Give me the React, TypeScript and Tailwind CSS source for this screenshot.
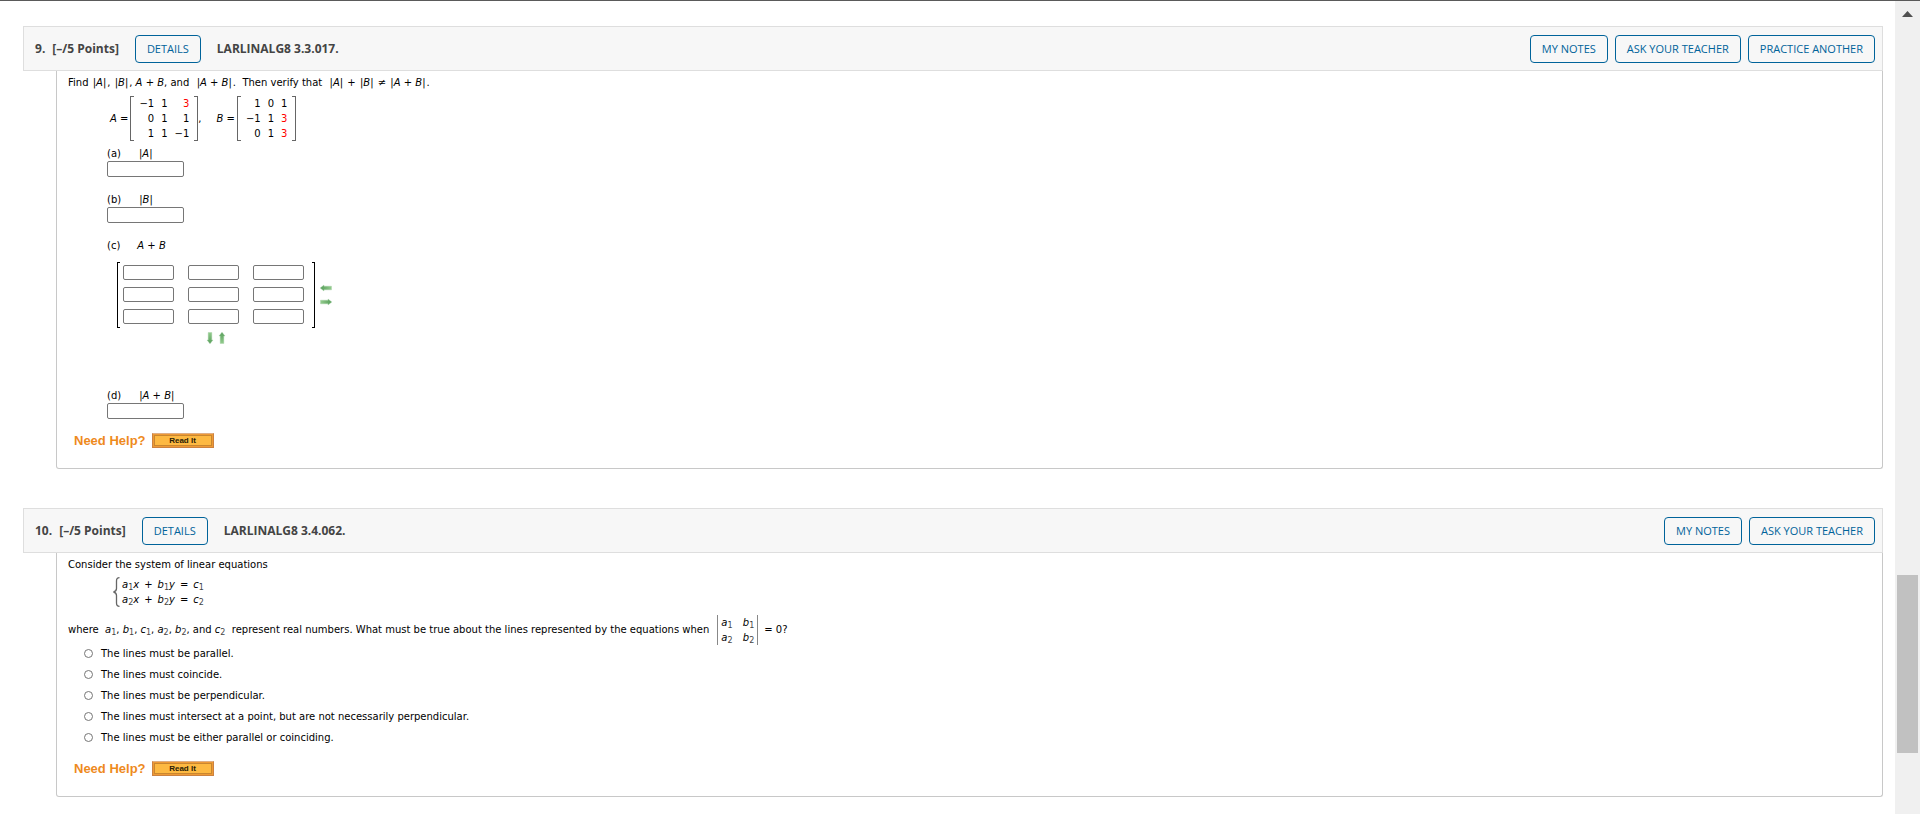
import React from 'react';

type Cell = { value: string; changed?: boolean };

const matrixA: Cell[] = [
  { value: '−1' }, { value: '1' }, { value: '3', changed: true },
  { value: '0' }, { value: '1' }, { value: '1' },
  { value: '1' }, { value: '1' }, { value: '−1' },
];

const matrixB: Cell[] = [
  { value: '1' }, { value: '0' }, { value: '1' },
  { value: '−1' }, { value: '1' }, { value: '3', changed: true },
  { value: '0' }, { value: '1' }, { value: '3', changed: true },
];

const choices = [
  'The lines must be parallel.',
  'The lines must coincide.',
  'The lines must be perpendicular.',
  'The lines must intersect at a point, but are not necessarily perpendicular.',
  'The lines must be either parallel or coinciding.',
];

const HeaderButton: React.FC<{ children: React.ReactNode }> = ({ children }) => (
  <button
    type="button"
    className="h-7 rounded border border-[#00639a] px-[11px] text-[11px] leading-none text-[#00639a] hover:bg-white"
  >
    {children}
  </button>
);

interface QuestionProps {
  number: string;
  code: string;
  actions: string[];
  children: React.ReactNode;
}

const Question: React.FC<QuestionProps> = ({ number, code, actions, children }) => (
  <section>
    <header className="flex h-[45px] items-center border border-[#dedede] bg-[#f7f7f7] pr-[7px] pl-[11px] font-['Open_Sans',sans-serif] text-[12px] font-bold text-[#444]">
      <h2 className="mr-4 flex gap-[7px]">
        <span>{number}.</span>
        <span>[–/5 Points]</span>
      </h2>
      <div className="font-normal">
        <HeaderButton>DETAILS</HeaderButton>
      </div>
      <span className="ml-4">{code}</span>
      <div className="ml-auto flex gap-[7px] font-normal">
        {actions.map((action) => (
          <HeaderButton key={action}>{action}</HeaderButton>
        ))}
      </div>
    </header>
    <div className="ml-[33px] rounded-b-[3px] border border-t-0 border-[#c8c8c8] pt-[5px] pb-5 pl-[11px] text-[10px] leading-[14px]">
      {children}
    </div>
  </section>
);

const Bracket: React.FC<{ side: 'left' | 'right'; dark?: boolean }> = ({ side, dark }) => (
  <span
    className={`shrink-0 self-stretch border-y ${side === 'left' ? 'border-l' : 'border-r'} ${
      dark ? 'w-[3px] border-black' : 'w-1 border-[#666]'
    }`}
  />
);

const Matrix: React.FC<{ cells: Cell[] }> = ({ cells }) => (
  <span className="flex">
    <Bracket side="left" />
    <span className="grid grid-cols-[repeat(3,auto)] gap-x-[7px] px-[5px] text-right leading-[15px]">
      {cells.map((cell, i) => (
        <span key={i} className={cell.changed ? 'text-[#f00]' : ''}>{cell.value}</span>
      ))}
    </span>
    <Bracket side="right" />
  </span>
);

// Determinant bars around an expression
const Det: React.FC<{ children: React.ReactNode }> = ({ children }) => (
  <span className="px-px">|{children}|</span>
);

const Term: React.FC<{ name: string; index: number }> = ({ name, index }) => (
  <>
    <i>{name}</i>
    <sub className="text-[8px] text-[#444]">{index}</sub>
  </>
);

interface PartProps {
  id: string;
  label: React.ReactNode;
}

const Part: React.FC<PartProps> = ({ id, label }) => (
  <div>
    <label htmlFor={`part-${id}`} className="flex gap-[17px]">
      <span>({id})</span>
      <span>{label}</span>
    </label>
    <input
      id={`part-${id}`}
      type="text"
      className="block h-4 w-[77px] rounded-xs border border-[#767676] bg-white px-1"
    />
  </div>
);

const arrowTurns = {
  right: 'rotate-0',
  down: 'rotate-90',
  left: 'rotate-180',
  up: '-rotate-90',
};

const ResizeButton: React.FC<{ direction: keyof typeof arrowTurns; label: string }> = ({ direction, label }) => (
  <button type="button" aria-label={label} className="flex size-3 items-center justify-center">
    <svg viewBox="0 0 12 12" className={`size-3 ${arrowTurns[direction]}`}>
      <defs>
        <linearGradient id={`green-${direction}`} x1="0" y1="0" x2="1" y2="0">
          <stop offset="0" stopColor="#93cc8d" />
          <stop offset="1" stopColor="#569d5a" />
        </linearGradient>
      </defs>
      <path
        d="M.5 4.2H8V3L11.8 6 8 9V7.800H.5Z"
        fill={`url(#green-${direction})`}
        stroke="#a5cfa3"
        strokeWidth=".4"
      />
    </svg>
  </button>
);

const NeedHelp: React.FC = () => (
  <div className="ml-1.5 flex h-[15px] items-center gap-1.5 font-['Liberation_Sans',Arial,sans-serif] font-bold">
    <span className="text-[13px] text-[#ee8a1d]">Need Help?</span>
    <button
      type="button"
      className="flex h-[15px] w-[62px] border border-[#cc8240] border-t-[#dfae84] bg-[#ee9a35] p-px text-[8px] leading-none text-[#2b1c05]"
    >
      <span className="flex h-full w-full items-center justify-center border border-[#c98630] bg-[#fdb942]">
        Read It
      </span>
    </button>
  </div>
);

const ScrollTrack: React.FC = () => (
  <div aria-hidden="true" className="flex w-[25px] shrink-0 flex-col items-center bg-[#f0f0f0]">
    <svg viewBox="0 0 11 6" className="mt-2.5 h-1.5 w-[11px]">
      <path d="M5.5 0 11 6H0Z" fill="#505050" />
    </svg>
    <div className="grow-[558]" />
    <div className="w-[21px] grow-[178] bg-[#c1c1c1]" />
    <div className="grow-[61]" />
  </div>
);

const App: React.FC = () => {
  return (
    <div className="flex min-h-screen border-t border-[#5a5a5a] bg-white font-[Verdana,'DejaVu_Sans',sans-serif] text-black">
      <main className="flex min-w-0 flex-1 flex-col gap-[39px] pt-[25px] pr-3 pb-4 pl-[23px]">
        <Question
          number="9"
          code="LARLINALG8 3.3.017."
          actions={['MY NOTES', 'ASK YOUR TEACHER', 'PRACTICE ANOTHER']}
        >
          <p>
            Find <Det><i>A</i></Det>, <Det><i>B</i></Det>, <i>A</i> + <i>B</i>, and&nbsp;{' '}
            <Det><i>A</i> + <i>B</i></Det>.&nbsp; Then verify that&nbsp; <Det><i>A</i></Det> +{' '}
            <Det><i>B</i></Det> ≠ <Det><i>A</i> + <i>B</i></Det>.
          </p>
          <div className="mt-1.5 ml-[42px] flex items-center">
            <span className="mr-0.5"><i>A</i> =</span>
            <Matrix cells={matrixA} />
            <span className="mr-[15px]">,</span>
            <span className="mr-0.5"><i>B</i> =</span>
            <Matrix cells={matrixB} />
          </div>

          <div className="mt-1.5 ml-[39px] flex flex-col gap-4">
            <Part id="a" label={<Det><i>A</i></Det>} />
            <Part id="b" label={<Det><i>B</i></Det>} />
            <div>
              <div className="flex gap-[17px]">
                <span>(c)</span>
                <span><i>A</i> + <i>B</i></span>
              </div>
              <div className="mt-[9px] ml-2.5 flex w-fit items-center">
                <Bracket side="left" dark />
                <div className="grid grid-cols-3 gap-x-3.5 gap-y-[7px] pt-[3px] pr-2 pb-1 pl-[3px]">
                  {Array.from({ length: 9 }, (_, i) => (
                    <input
                      key={i}
                      type="text"
                      aria-label={`Row ${Math.floor(i / 3) + 1}, column ${(i % 3) + 1}`}
                      className="h-[15px] w-[51px] rounded-xs border border-[#767676] bg-white px-1"
                    />
                  ))}
                </div>
                <Bracket side="right" dark />
                <div className="ml-[5px] flex flex-col gap-0.5">
                  <ResizeButton direction="left" label="Remove column" />
                  <ResizeButton direction="right" label="Add column" />
                </div>
              </div>
              <div className="mt-1 flex w-[218px] justify-center">
                <ResizeButton direction="down" label="Add row" />
                <ResizeButton direction="up" label="Remove row" />
              </div>
            </div>
          </div>
          <div className="mt-[45px] mb-3.5 ml-[39px]">
            <Part id="d" label={<Det><i>A</i> + <i>B</i></Det>} />
          </div>
          <NeedHelp />
        </Question>

        <Question number="10" code="LARLINALG8 3.4.062." actions={['MY NOTES', 'ASK YOUR TEACHER']}>
          <p>Consider the system of linear equations</p>
          <div className="mt-[5px] ml-[45px] flex gap-0.5">
            <svg viewBox="0 0 7 30" className="h-[30px] w-[7px]" fill="none" stroke="#666" strokeWidth="1.3">
              <path d="M6.5 .7C4.2 .7 3.5 2 3.5 4V11.5C3.5 13.5 2.5 14.5 .5 15 2.5 15.5 3.5 16.5 3.5 18.5V26C3.5 28 4.2 29.3 6.5 29.3" />
            </svg>
            <div className="leading-[15px]">
              {[1, 2].map((n) => (
                <div key={n} className="flex h-[15px] gap-[5px]">
                  <span><Term name="a" index={n} /><i>x</i></span>
                  <span>+</span>
                  <span><Term name="b" index={n} /><i>y</i></span>
                  <span>=</span>
                  <span><Term name="c" index={n} /></span>
                </div>
              ))}
            </div>
          </div>
          <div className="mt-2 flex items-center">
            <p>
              where&nbsp; <Term name="a" index={1} />, <Term name="b" index={1} />, <Term name="c" index={1} />,{' '}
              <Term name="a" index={2} />, <Term name="b" index={2} />, and <Term name="c" index={2} />
              &nbsp; represent real numbers. What must be true about the lines represented by the equations when
            </p>
            <div className="mr-1.5 ml-2 grid grid-cols-2 gap-x-2.5 border-x border-[#888] px-[3px] leading-[15px]">
              <span className="h-[15px]"><Term name="a" index={1} /></span>
              <span className="h-[15px]"><Term name="b" index={1} /></span>
              <span className="h-[15px]"><Term name="a" index={2} /></span>
              <span className="h-[15px]"><Term name="b" index={2} /></span>
            </div>
            <span>= 0?</span>
          </div>
          <div role="radiogroup" className="mt-0.5 mb-[17px] ml-4 flex flex-col items-start gap-2">
            {choices.map((choice) => (
              <label key={choice} className="flex items-center gap-2 leading-[13px]">
                <input
                  type="radio"
                  name="lines"
                  className="size-[9px] appearance-none rounded-full border border-[#767676] bg-white checked:bg-[#00639a]"
                />
                {choice}
              </label>
            ))}
          </div>
          <NeedHelp />
        </Question>
      </main>
      <ScrollTrack />
    </div>
  );
};

export default App;
